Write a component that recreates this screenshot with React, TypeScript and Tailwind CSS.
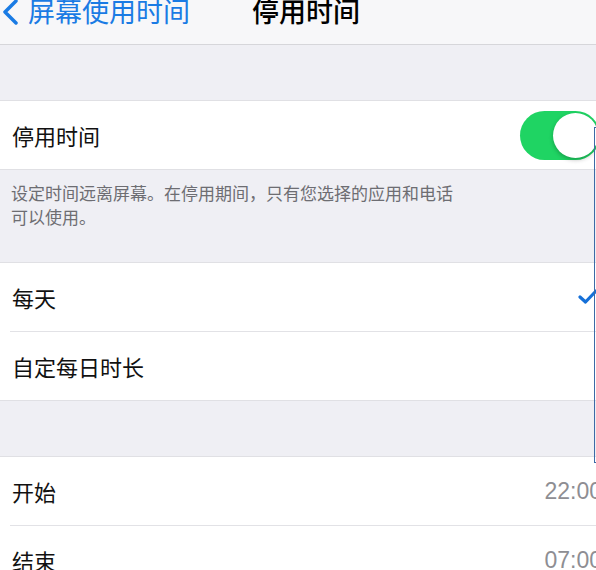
import React from "react"

const font = { fontFamily: '"Noto Sans CJK SC", "Noto Sans", sans-serif' }

function Row({ label, right }: { label: string; right?: React.ReactNode }) {
  return (
    <div className="h-[68px] flex items-center justify-between pl-3 pr-6 bg-white">
      <span className="text-[22px] text-[#111]">{label}</span>
      {right}
    </div>
  )
}

function Separator() {
  return (
    <div className="bg-white">
      <div className="ml-[10px] h-px bg-[#e2e2e6]" />
    </div>
  )
}

function Toggle() {
  return (
    <div className="w-[80px] h-[49px] rounded-full bg-[#1fd463] relative">
      <div className="absolute right-[2px] top-[2px] w-[45px] h-[45px] rounded-full bg-white shadow-[0_2px_4px_rgba(0,0,0,0.25)]" />
    </div>
  )
}

function Check() {
  return (
    <svg width="20" height="16" viewBox="0 0 20 16" className="mr-[2px]">
      <polyline points="2,8 7.5,13 18,2" fill="none" stroke="#1570d8" strokeWidth="3.2" strokeLinecap="round" strokeLinejoin="round" />
    </svg>
  )
}

function Time({ value }: { value: string }) {
  return (
    <span className="text-[23px] text-[#8e8e93] -mr-[2px]" style={{ fontFamily: '"Liberation Sans", sans-serif' }}>
      {value}
    </span>
  )
}

export default function App() {
  return (
    <div className="w-[596px] h-[570px] overflow-hidden bg-[#efeff4] relative" style={font}>
      <div className="w-[624px]">
        {/* Nav bar */}
        <div className="h-[45px] border-b border-[#d6d6da] bg-[#f7f7f9] flex items-start">
          <svg width="20" height="26" viewBox="0 0 20 26" className="ml-[1px] -mt-[1px]">
            <polyline points="15,2 4,13 15,24" fill="none" stroke="#1a7be4" strokeWidth="3.5" strokeLinecap="round" strokeLinejoin="round" />
          </svg>
          <span className="ml-[7px] text-[27px] leading-[22px] text-[#1a7be4]">屏幕使用时间</span>
          <span className="ml-[62px] text-[27px] leading-[22px] font-medium text-black">停用时间</span>
        </div>

        <div className="h-[55px]" />

        {/* Downtime toggle */}
        <div className="border-t border-b border-[#e0e0e4]">
          <Row label="停用时间" right={<Toggle />} />
        </div>

        <div className="h-[92px] pt-[11px] pl-[11px] text-[17px] leading-[24px] text-[#6d6d72]">
          设定时间远离屏幕。在停用期间，只有您选择的应用和电话
          <br />
          可以使用。
        </div>

        {/* Schedule */}
        <div className="border-t border-b border-[#e0e0e4]">
          <Row label="每天" right={<Check />} />
          <Separator />
          <Row label="自定每日时长" />
        </div>

        <div className="h-[55px]" />

        <div className="border-t border-[#e0e0e4]">
          <Row label="开始" right={<Time value="22:00" />} />
          <Separator />
          <Row label="结束" right={<Time value="07:00" />} />
        </div>
      </div>

      {/* thin selection outline at right edge */}
      <div className="absolute left-[594px] top-[127px] w-[10px] h-[336px] border border-[#3d6aa6]" />
    </div>
  )
}
